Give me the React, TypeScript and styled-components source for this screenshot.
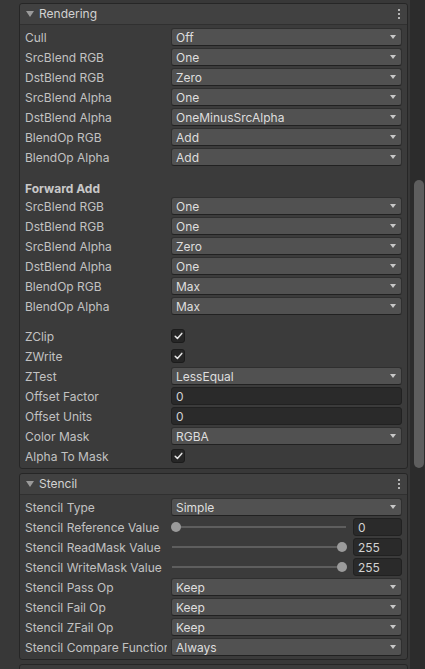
import React from "react";
import styled, { createGlobalStyle } from "styled-components";

const Global = createGlobalStyle`
  html, body { margin: 0; padding: 0; background: #383838; overflow: hidden; }
  * { box-sizing: border-box; }
`;

const Window = styled.div`
  width: 425px;
  height: 669px;
  display: flex;
  font-family: Inter, "Noto Sans", sans-serif;
  font-size: 12px;
  background: #383838;
  overflow: hidden;
`;

const Column = styled.div`
  flex: 1;
  padding: 3px 2px 0 19px;
  display: flex;
  flex-direction: column;
  gap: 4px;
`;

const ScrollTrack = styled.div`
  width: 15px;
  background: #2c2c2c;
  padding: 180px 1px 0 4px;
`;

const ScrollThumb = styled.div`
  width: 10px;
  height: 288px;
  border-radius: 5px;
  background: #5e5e5e;
`;

const Panel = styled.section`
  border: 1px solid #262626;
  border-radius: 3px;
  background: #3b3b3b;
  flex-shrink: 0;
`;

const Header = styled.header`
  height: 21px;
  display: flex;
  align-items: center;
  padding: 0 7px 1px 6px;
  background: #414141;
  border-bottom: 1px solid #303030;
  border-radius: 3px 3px 0 0;
  color: #d2d2d2;
`;

const Fold = styled.span`
  width: 0;
  height: 0;
  border-left: 4px solid transparent;
  border-right: 4px solid transparent;
  border-top: 6px solid #9a9a9a;
  margin-right: 5px;
`;

const Title = styled.span`
  flex: 1;
`;

const Kebab = styled.span`
  display: flex;
  flex-direction: column;
  gap: 2px;
  & > i {
    width: 2px;
    height: 2px;
    background: #b4b4b4;
  }
`;

const Body = styled.div`
  padding: 3px 5px 1px 5px;
`;

const Row = styled.div`
  display: grid;
  grid-template-columns: 142px 1fr;
  column-gap: 4px;
  align-items: center;
  height: 18px;
  margin-bottom: 2px;
`;

const Label = styled.span`
  color: #c2c2c2;
  white-space: nowrap;
  overflow: hidden;
`;

const Heading = styled.div`
  height: 18px;
  margin-top: 13px;
  display: flex;
  align-items: center;
  font-weight: 700;
  color: #c8c8c8;
`;

const Spacer = styled.div`
  height: 10px;
`;

const Dropdown = styled.div`
  height: 18px;
  display: flex;
  align-items: center;
  justify-content: space-between;
  padding: 0 5px 0 4px;
  background: #515151;
  border: 1px solid #2f2f2f;
  border-bottom-color: #212121;
  border-radius: 3px;
  color: #dedede;
`;

const Arrow = styled.span`
  width: 0;
  height: 0;
  border-left: 3.5px solid transparent;
  border-right: 3.5px solid transparent;
  border-top: 4px solid #c8c8c8;
`;

const TextField = styled.div<{ $w?: number }>`
  height: 18px;
  ${(p) => (p.$w ? `width: ${p.$w}px;` : "")}
  display: flex;
  align-items: center;
  padding: 0 4px;
  background: #2a2a2a;
  border: 1px solid #212121;
  border-radius: 3px;
  color: #d2d2d2;
`;

const Check = styled.div`
  width: 14px;
  height: 14px;
  background: #262626;
  border: 1px solid #1c1c1c;
  border-radius: 3px;
  display: flex;
  align-items: center;
  justify-content: center;
`;

const SliderRow = styled.div`
  display: flex;
  align-items: center;
  gap: 6px;
`;

const Track = styled.div`
  position: relative;
  flex: 1;
  height: 10px;
  display: flex;
  align-items: center;
  padding: 0 1px;
  &::before {
    content: "";
    flex: 1;
    height: 2px;
    background: #5e5e5e;
  }
`;

const Knob = styled.span`
  position: absolute;
  top: 0;
  width: 10px;
  height: 10px;
  border-radius: 50%;
  background: #9b9b9b;
`;

type Field =
  | { kind: "drop"; value: string }
  | { kind: "text"; value: string }
  | { kind: "check" }
  | { kind: "slider"; value: number };

type Item = { label: string; field: Field } | { heading: string } | { spacer: true };

const drop = (label: string, value: string): Item => ({ label, field: { kind: "drop", value } });
const text = (label: string, value: string): Item => ({ label, field: { kind: "text", value } });
const check = (label: string): Item => ({ label, field: { kind: "check" } });
const slider = (label: string, value: number): Item => ({ label, field: { kind: "slider", value } });

const rendering: Item[] = [
  drop("Cull", "Off"),
  drop("SrcBlend RGB", "One"),
  drop("DstBlend RGB", "Zero"),
  drop("SrcBlend Alpha", "One"),
  drop("DstBlend Alpha", "OneMinusSrcAlpha"),
  drop("BlendOp RGB", "Add"),
  drop("BlendOp Alpha", "Add"),
  { heading: "Forward Add" },
  drop("SrcBlend RGB", "One"),
  drop("DstBlend RGB", "One"),
  drop("SrcBlend Alpha", "Zero"),
  drop("DstBlend Alpha", "One"),
  drop("BlendOp RGB", "Max"),
  drop("BlendOp Alpha", "Max"),
  { spacer: true },
  check("ZClip"),
  check("ZWrite"),
  drop("ZTest", "LessEqual"),
  text("Offset Factor", "0"),
  text("Offset Units", "0"),
  drop("Color Mask", "RGBA"),
  check("Alpha To Mask"),
];

const stencil: Item[] = [
  drop("Stencil Type", "Simple"),
  slider("Stencil Reference Value", 0),
  slider("Stencil ReadMask Value", 255),
  slider("Stencil WriteMask Value", 255),
  drop("Stencil Pass Op", "Keep"),
  drop("Stencil Fail Op", "Keep"),
  drop("Stencil ZFail Op", "Keep"),
  drop("Stencil Compare Function", "Always"),
];

const Tick = () => (
  <svg width="9" height="8" viewBox="0 0 9 8">
    <path d="M1.2 4.3 L3.4 6.4 L7.8 1.4" fill="none" stroke="#e4e4e4" strokeWidth="1.5" strokeLinecap="round" strokeLinejoin="round" />
  </svg>
);

function Control({ field }: { field: Field }) {
  switch (field.kind) {
    case "drop":
      return (
        <Dropdown>
          <span>{field.value}</span>
          <Arrow />
        </Dropdown>
      );
    case "text":
      return <TextField>{field.value}</TextField>;
    case "check":
      return (
        <Check>
          <Tick />
        </Check>
      );
    case "slider":
      return (
        <SliderRow>
          <Track>
            <Knob style={{ left: `calc(${field.value / 255} * (100% - 10px))` }} />
          </Track>
          <TextField $w={49}>{field.value}</TextField>
        </SliderRow>
      );
  }
}

function Section({ title, items }: { title: string; items: Item[] }) {
  return (
    <Panel>
      <Header>
        <Fold />
        <Title>{title}</Title>
        <Kebab>
          <i />
          <i />
          <i />
        </Kebab>
      </Header>
      <Body>
        {items.map((it, i) => {
          if ("heading" in it) return <Heading key={i}>{it.heading}</Heading>;
          if ("spacer" in it) return <Spacer key={i} />;
          return (
            <Row key={i}>
              <Label>{it.label}</Label>
              <Control field={it.field} />
            </Row>
          );
        })}
      </Body>
    </Panel>
  );
}

export default function App() {
  return (
    <Window>
      <Global />
      <Column>
        <Section title="Rendering" items={rendering} />
        <Section title="Stencil" items={stencil} />
        <Panel style={{ height: 20 }} />
      </Column>
      <ScrollTrack>
        <ScrollThumb />
      </ScrollTrack>
    </Window>
  );
}
